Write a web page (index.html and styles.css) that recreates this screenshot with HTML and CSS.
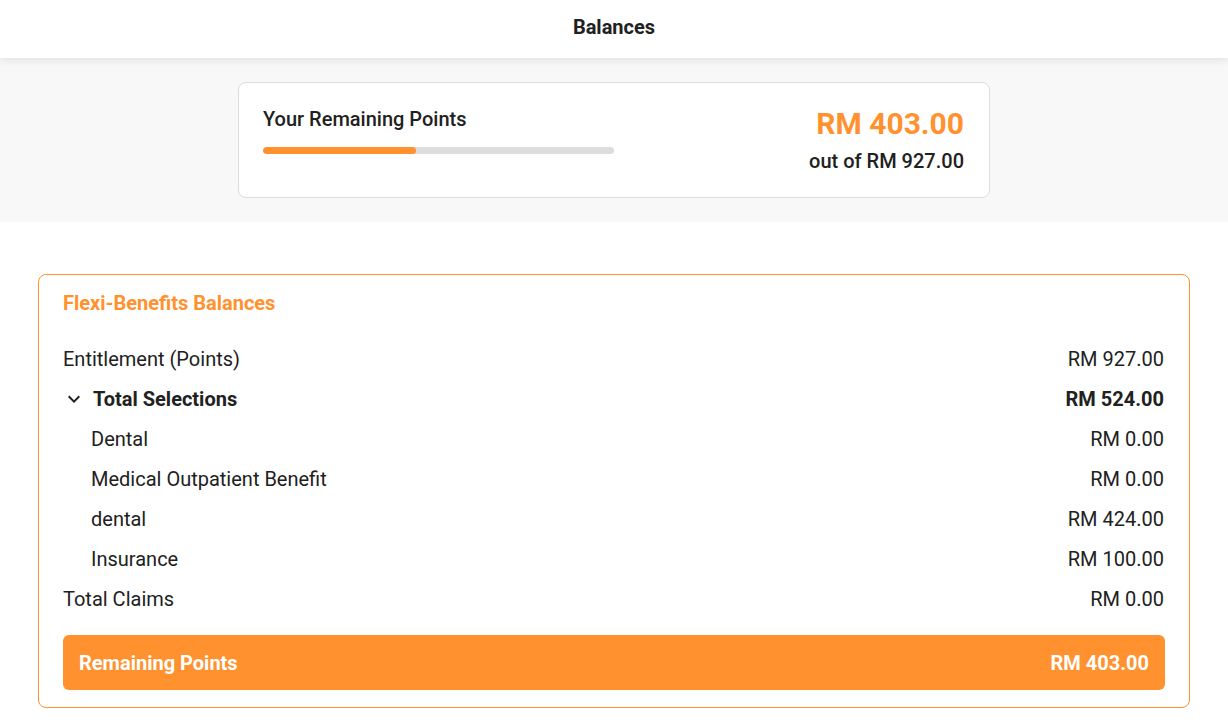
FILE: index.html
```html
<!DOCTYPE html>
<html lang="en">
<head>
  <meta charset="UTF-8">
  <title>Balances</title>
  <link rel="stylesheet" href="styles.css">
</head>
<body>

  <header class="topbar">
    <h1 class="topbar-title">Balances</h1>
  </header>

  <section class="summary">
    <div class="summary-card">
      <div class="summary-left">
        <div class="summary-label">Your Remaining Points</div>
        <div class="progress">
          <div class="progress-fill" style="width: 43.47%"></div>
        </div>
      </div>
      <div class="summary-right">
        <div class="summary-amount">RM 403.00</div>
        <div class="summary-total">out of RM 927.00</div>
      </div>
    </div>
  </section>

  <section class="balances">
    <h2 class="balances-title">Flexi-Benefits Balances</h2>

    <div class="row">
      <span>Entitlement (Points)</span>
      <span>RM 927.00</span>
    </div>
    <div class="row row-bold">
      <span class="row-toggle">
        <svg class="chevron" viewBox="0 0 24 24" width="24" height="24">
          <path d="M16.59 8.59L12 13.17 7.41 8.59 6 10l6 6 6-6z" fill="#212121"/>
        </svg>
        Total Selections
      </span>
      <span>RM 524.00</span>
    </div>
    <div class="row row-sub">
      <span>Dental</span>
      <span>RM 0.00</span>
    </div>
    <div class="row row-sub">
      <span>Medical Outpatient Benefit</span>
      <span>RM 0.00</span>
    </div>
    <div class="row row-sub">
      <span>dental</span>
      <span>RM 424.00</span>
    </div>
    <div class="row row-sub">
      <span>Insurance</span>
      <span>RM 100.00</span>
    </div>
    <div class="row">
      <span>Total Claims</span>
      <span>RM 0.00</span>
    </div>

    <div class="remaining">
      <span>Remaining Points</span>
      <span>RM 403.00</span>
    </div>
  </section>

</body>
</html>
```

FILE: styles.css
```css
body {
  margin: 0;
  font-family: Roboto, "Liberation Sans", sans-serif;
  color: #212121;
  background: #fff;
}
.topbar {
  position: relative;
  z-index: 1;
  height: 58px;
  display: flex;
  align-items: center;
  justify-content: center;
  background: #fff;
  box-shadow: 0 2px 8px rgba(0, 0, 0, 0.1);
}
.topbar-title {
  margin: 0;
  font-size: 20px;
  font-weight: 700;
  line-height: 24px;
  margin-top: -4px;
}
.summary {
  background: #f8f8f8;
  padding: 24px 0;
}
.summary-card {
  width: 752px;
  box-sizing: border-box;
  margin: 0 auto;
  background: #fff;
  border: 1px solid #ddd;
  border-radius: 8px;
  padding: 24px 25px 24px 24px;
  display: flex;
  justify-content: space-between;
}
.summary-label {
  font-size: 20px;
  font-weight: 500;
  line-height: 24px;
}
.progress {
  width: 351px;
  height: 7px;
  margin-top: 16px;
  background: #ddd;
  border-radius: 4px;
  overflow: hidden;
}
.progress-fill {
  height: 100%;
  background: #ff922f;
  border-radius: 4px;
}
.summary-right {
  text-align: right;
}
.summary-amount {
  font-size: 30px;
  font-weight: 700;
  line-height: 34px;
  color: #ff922f;
}
.summary-total {
  margin-top: 8px;
  font-size: 20px;
  font-weight: 500;
  line-height: 24px;
}
.balances {
  margin: 52px 38px 14px;
  border: 1px solid #ff922f;
  border-radius: 8px;
  padding: 16px 24px 17px;
}
.balances-title {
  margin: 0 0 24px;
  font-size: 20px;
  font-weight: 700;
  line-height: 24px;
  color: #ff922f;
}
.row {
  display: flex;
  justify-content: space-between;
  align-items: center;
  height: 40px;
  font-size: 20px;
  padding-right: 1px;
}
.row-bold {
  font-weight: 700;
}
.row-sub {
  padding-left: 28px;
}
.row-toggle {
  display: flex;
  align-items: center;
}
.chevron {
  margin-left: -1px;
  margin-right: 7px;
}
.remaining {
  margin-top: 16px;
  height: 55px;
  display: flex;
  justify-content: space-between;
  align-items: center;
  padding: 0 16px;
  background: #ff922f;
  border-radius: 6px;
  color: #fff;
  font-size: 20px;
  font-weight: 700;
}
```
